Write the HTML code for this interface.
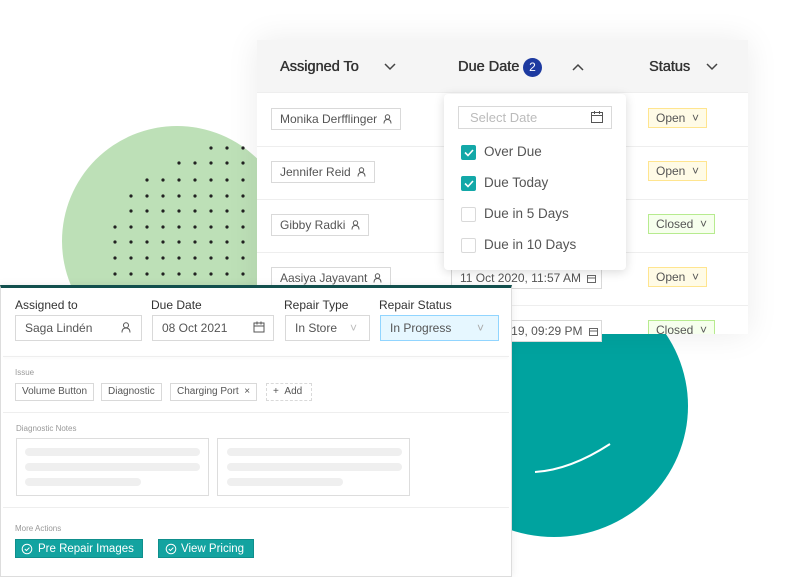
<!DOCTYPE html>
<html><head><meta charset="utf-8"><style>
*{box-sizing:border-box;margin:0;padding:0}
body{width:800px;height:577px;overflow:hidden;background:#fff;font-family:"Liberation Sans",sans-serif;position:relative;color:#555}
.abs{position:absolute}
.tag{position:absolute;border:1px solid #d9d9d9;background:#fff;font-size:12px;color:#555;height:22px;line-height:20px;padding:0 8px;white-space:nowrap}
.st{position:absolute;left:648px;height:20px;line-height:18px;font-size:12px;padding:0 7px;color:#555;white-space:nowrap}
.open{background:#fffbe6;border:1px solid #ffe58f}
.closed{background:#f6ffed;border:1px solid #b7eb8f}
.row{position:absolute;left:257px;width:491px;height:1px;background:#eee}
.cb{position:absolute;left:461px;width:15px;height:15px;border:1px solid #d9d9d9;border-radius:2px;background:#fff}
.cb.on{background:#13a8a8;border-color:#13a8a8}
.opt{position:absolute;left:484px;font-size:13.5px;color:#555}
.lbl{position:absolute;font-size:12px;color:#333}
.inp{position:absolute;top:315px;height:26px;border:1px solid #d9d9d9;background:#fff;font-size:12px;color:#555;line-height:24px;padding-left:9px}
.small{position:absolute;font-size:8px;color:#999;left:15px}
.chip{position:absolute;top:383px;height:18px;border:1px solid #d9d9d9;font-size:10px;line-height:16px;padding:0 6px;color:#555;white-space:nowrap}
.sk{position:absolute;height:8px;border-radius:4px;background:#efefef}
.btn{position:absolute;top:539px;height:19px;background:#13a3a0;color:#fff;font-size:11.5px;line-height:19px;padding-left:22px;border:1px solid #0f8f8c}
.hd{position:absolute;top:59px;font-size:14.5px;color:#333;text-shadow:0 0 0.5px #333,0.3px 0 0 #333}
.pi{display:inline-block;vertical-align:-1px;margin-left:6px}
</style></head><body>
<div class="abs" style="left:62px;top:126px;width:230px;height:230px;border-radius:50%;background:#bde0b7"></div>
<div class="abs" style="left:420px;top:275px;width:268px;height:262px;border-radius:50%;background:#00a39f"></div>
<svg class="abs" style="left:530px;top:440px" width="90" height="40"><path d="M5 32 Q40 30 80 4" stroke="#fff" stroke-width="2" fill="none"/></svg>
<svg class="abs" style="left:0;top:0" width="260" height="290">
<g fill="#222">
<circle cx="211" cy="148" r="1.6"/><circle cx="227" cy="148" r="1.6"/><circle cx="243" cy="148" r="1.6"/>
<circle cx="179" cy="163" r="1.6"/><circle cx="195" cy="163" r="1.6"/><circle cx="211" cy="163" r="1.6"/><circle cx="227" cy="163" r="1.6"/><circle cx="243" cy="163" r="1.6"/>
<circle cx="147" cy="180" r="1.6"/><circle cx="163" cy="180" r="1.6"/><circle cx="179" cy="180" r="1.6"/><circle cx="195" cy="180" r="1.6"/><circle cx="211" cy="180" r="1.6"/><circle cx="227" cy="180" r="1.6"/><circle cx="243" cy="180" r="1.6"/>
<circle cx="131" cy="196" r="1.6"/><circle cx="147" cy="196" r="1.6"/><circle cx="163" cy="196" r="1.6"/><circle cx="179" cy="196" r="1.6"/><circle cx="195" cy="196" r="1.6"/><circle cx="211" cy="196" r="1.6"/><circle cx="227" cy="196" r="1.6"/><circle cx="243" cy="196" r="1.6"/>
<circle cx="131" cy="211" r="1.6"/><circle cx="147" cy="211" r="1.6"/><circle cx="163" cy="211" r="1.6"/><circle cx="179" cy="211" r="1.6"/><circle cx="195" cy="211" r="1.6"/><circle cx="211" cy="211" r="1.6"/><circle cx="227" cy="211" r="1.6"/><circle cx="243" cy="211" r="1.6"/>
<circle cx="115" cy="227" r="1.6"/><circle cx="131" cy="227" r="1.6"/><circle cx="147" cy="227" r="1.6"/><circle cx="163" cy="227" r="1.6"/><circle cx="179" cy="227" r="1.6"/><circle cx="195" cy="227" r="1.6"/><circle cx="211" cy="227" r="1.6"/><circle cx="227" cy="227" r="1.6"/><circle cx="243" cy="227" r="1.6"/>
<circle cx="115" cy="242" r="1.6"/><circle cx="131" cy="242" r="1.6"/><circle cx="147" cy="242" r="1.6"/><circle cx="163" cy="242" r="1.6"/><circle cx="179" cy="242" r="1.6"/><circle cx="195" cy="242" r="1.6"/><circle cx="211" cy="242" r="1.6"/><circle cx="227" cy="242" r="1.6"/><circle cx="243" cy="242" r="1.6"/>
<circle cx="115" cy="258" r="1.6"/><circle cx="131" cy="258" r="1.6"/><circle cx="147" cy="258" r="1.6"/><circle cx="163" cy="258" r="1.6"/><circle cx="179" cy="258" r="1.6"/><circle cx="195" cy="258" r="1.6"/><circle cx="211" cy="258" r="1.6"/><circle cx="227" cy="258" r="1.6"/><circle cx="243" cy="258" r="1.6"/>
<circle cx="115" cy="274" r="1.6"/><circle cx="131" cy="274" r="1.6"/><circle cx="147" cy="274" r="1.6"/><circle cx="163" cy="274" r="1.6"/><circle cx="179" cy="274" r="1.6"/><circle cx="195" cy="274" r="1.6"/><circle cx="211" cy="274" r="1.6"/><circle cx="227" cy="274" r="1.6"/><circle cx="243" cy="274" r="1.6"/>
</g></svg>
<!-- table panel -->
<div class="abs" style="left:257px;top:40px;width:491px;height:294px;background:#fff;box-shadow:0 0 30px rgba(0,0,0,0.08)"></div>
<div class="abs" style="left:257px;top:40px;width:491px;height:53px;background:#f5f5f5;border-bottom:1px solid #eee"></div>
<div class="hd" style="left:280px">Assigned To</div>
<svg class="abs" style="left:384px;top:63px" width="12" height="8"><path d="M1 1l5 5 5-5" stroke="#444" stroke-width="1.5" fill="none"/></svg>
<div class="hd" style="left:458px">Due Date</div>
<div class="abs" style="left:523px;top:58px;width:19px;height:19px;border-radius:50%;background:#1d3aa0;color:#fff;font-size:12px;text-align:center;line-height:19px">2</div>
<svg class="abs" style="left:572px;top:63px" width="12" height="8"><path d="M1 7l5-5 5 5" stroke="#444" stroke-width="1.5" fill="none"/></svg>
<div class="hd" style="left:649px">Status</div>
<svg class="abs" style="left:706px;top:63px" width="12" height="8"><path d="M1 1l5 5 5-5" stroke="#444" stroke-width="1.5" fill="none"/></svg>
<div class="row" style="top:146px"></div><div class="row" style="top:199px"></div><div class="row" style="top:252px"></div><div class="row" style="top:305px"></div>
<div class="tag" style="left:271px;top:108px">Monika Derfflinger<svg class="pi" width="9" height="10"><circle cx="4.5" cy="3" r="2.2" fill="none" stroke="#555"/><path d="M1 9.5q0-4 3.5-4t3.5 4" fill="none" stroke="#555"/></svg></div>
<div class="tag" style="left:271px;top:161px">Jennifer Reid<svg class="pi" width="9" height="10"><circle cx="4.5" cy="3" r="2.2" fill="none" stroke="#555"/><path d="M1 9.5q0-4 3.5-4t3.5 4" fill="none" stroke="#555"/></svg></div>
<div class="tag" style="left:271px;top:214px">Gibby Radki<svg class="pi" width="9" height="10"><circle cx="4.5" cy="3" r="2.2" fill="none" stroke="#555"/><path d="M1 9.5q0-4 3.5-4t3.5 4" fill="none" stroke="#555"/></svg></div>
<div class="tag" style="left:271px;top:267px">Aasiya Jayavant<svg class="pi" width="9" height="10"><circle cx="4.5" cy="3" r="2.2" fill="none" stroke="#555"/><path d="M1 9.5q0-4 3.5-4t3.5 4" fill="none" stroke="#555"/></svg></div>
<div class="tag" style="left:451px;top:267px;width:151px">11 Oct 2020, 11:57 AM<svg class="pi" width="9" height="9"><rect x="0.5" y="1.5" width="8" height="7" fill="none" stroke="#666"/><path d="M0.5 4h8" stroke="#666"/></svg></div>
<div class="tag" style="left:451px;top:320px;width:151px">11 Oct 2019, 09:29 PM<svg class="pi" width="9" height="9"><rect x="0.5" y="1.5" width="8" height="7" fill="none" stroke="#666"/><path d="M0.5 4h8" stroke="#666"/></svg></div>
<div class="st open" style="top:108px">Open &nbsp;˅</div>
<div class="st open" style="top:161px">Open &nbsp;˅</div>
<div class="st closed" style="top:214px">Closed &nbsp;˅</div>
<div class="st open" style="top:267px">Open &nbsp;˅</div>
<div class="st closed" style="top:320px;height:14px;overflow:hidden;border-bottom:none">Closed &nbsp;˅</div>
<!-- dropdown -->
<div class="abs" style="left:444px;top:94px;width:182px;height:176px;background:#fff;border-radius:4px;box-shadow:0 2px 10px rgba(0,0,0,0.15)"></div>
<div class="abs" style="left:458px;top:106px;width:154px;height:23px;border:1px solid #d9d9d9;font-size:13px;color:#bbb;padding-left:11px;line-height:21px">Select Date</div>
<svg class="abs" style="left:590px;top:110px" width="14" height="14"><rect x="1.5" y="2.5" width="11" height="10" fill="none" stroke="#555"/><path d="M1.5 5.5h11M4.5 1v3M9.5 1v3" stroke="#555"/></svg>
<div class="cb on" style="top:145px"></div><div class="cb on" style="top:176px"></div>
<svg class="abs" style="left:461px;top:145px" width="15" height="46"><path d="M4 7.5l3 3 5-5.5M4 38.5l3 3 5-5.5" stroke="#fff" stroke-width="1.6" fill="none"/></svg>
<div class="cb" style="top:207px"></div><div class="cb" style="top:238px"></div>
<div class="opt" style="top:144px">Over Due</div>
<div class="opt" style="top:175px">Due Today</div>
<div class="opt" style="top:206px">Due in 5 Days</div>
<div class="opt" style="top:237px">Due in 10 Days</div>
<!-- card -->
<div class="abs" style="left:0;top:285px;width:512px;height:292px;background:#fff;border:1px solid #ddd;border-top:3px solid #124f4d;box-shadow:0 0 8px rgba(0,0,0,0.08)"></div>
<div class="lbl" style="left:15px;top:298px">Assigned to</div>
<div class="lbl" style="left:151px;top:298px">Due Date</div>
<div class="lbl" style="left:284px;top:298px">Repair Type</div>
<div class="lbl" style="left:379px;top:298px">Repair Status</div>
<div class="inp" style="left:15px;width:127px">Saga Lindén</div>
<svg class="abs" style="left:121px;top:322px" width="10" height="11"><circle cx="5" cy="3.2" r="2.5" fill="none" stroke="#555"/><path d="M1 10.5q0-4.5 4-4.5t4 4.5" fill="none" stroke="#555"/></svg>
<div class="inp" style="left:152px;width:122px">08 Oct 2021</div>
<svg class="abs" style="left:253px;top:321px" width="12" height="12"><rect x="1" y="2" width="10" height="9" fill="none" stroke="#555"/><path d="M1 5h10M4 0.5v3M8 0.5v3" stroke="#555"/></svg>
<div class="inp" style="left:285px;width:85px">In Store<span class="abs" style="left:64px;color:#bbb">˅</span></div>
<div class="inp" style="left:380px;width:119px;background:#e6f7ff;border-color:#91d5ff">In Progress<span class="abs" style="left:96px;color:#aaa">˅</span></div>
<div class="abs" style="left:3px;top:356px;width:506px;height:1px;background:#eee;box-shadow:0 1px 3px rgba(0,0,0,0.06)"></div>
<div class="small" style="top:368px">Issue</div>
<div class="chip" style="left:15px">Volume Button</div>
<div class="chip" style="left:101px">Diagnostic</div>
<div class="chip" style="left:170px">Charging Port &nbsp;×</div>
<div class="chip" style="left:266px;border-style:dashed;width:46px">+ &nbsp;Add</div>
<div class="abs" style="left:3px;top:412px;width:506px;height:1px;background:#eee"></div>
<div class="small" style="top:424px;left:16px">Diagnostic Notes</div>
<div class="abs" style="left:16px;top:438px;width:193px;height:58px;border:1px solid #ddd"></div>
<div class="abs" style="left:217px;top:438px;width:193px;height:58px;border:1px solid #ddd"></div>
<div class="sk" style="left:25px;top:448px;width:175px"></div><div class="sk" style="left:25px;top:463px;width:175px"></div><div class="sk" style="left:25px;top:478px;width:116px"></div>
<div class="sk" style="left:227px;top:448px;width:175px"></div><div class="sk" style="left:227px;top:463px;width:175px"></div><div class="sk" style="left:227px;top:478px;width:116px"></div>
<div class="abs" style="left:3px;top:507px;width:506px;height:1px;background:#eee"></div>
<div class="small" style="top:524px">More Actions</div>
<div class="btn" style="left:15px;width:128px">Pre Repair Images</div>
<div class="btn" style="left:158px;width:96px">View Pricing</div>
<svg class="abs" style="left:20px;top:542px" width="160" height="14"><circle cx="7" cy="7" r="4.8" fill="none" stroke="#fff"/><path d="M4.8 7l1.6 1.6 3-3" stroke="#fff" fill="none"/><circle cx="151" cy="7" r="4.8" fill="none" stroke="#fff"/><path d="M148.8 7l1.6 1.6 3-3" stroke="#fff" fill="none"/></svg>
</body></html>
